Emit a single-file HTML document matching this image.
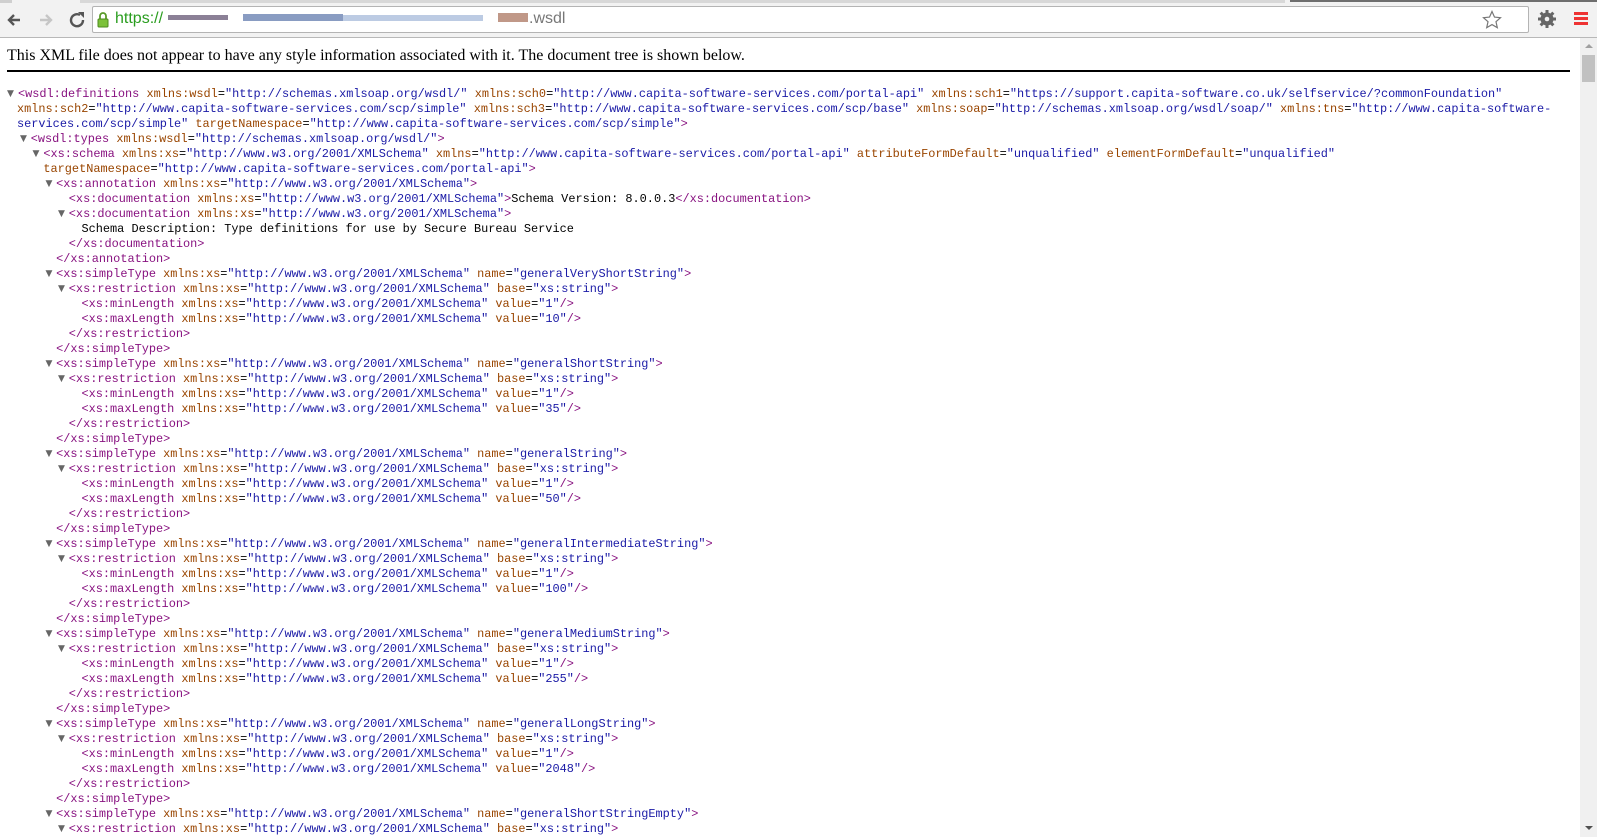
<!DOCTYPE html>
<html><head><meta charset="utf-8"><style>
*{margin:0;padding:0;box-sizing:border-box}
html,body{width:1597px;height:837px;overflow:hidden;background:#fff}
#tb{position:absolute;left:0;top:0;width:1597px;height:38px;background:#f2f2f2;border-bottom:1px solid #b8b8b8}
#tb .edge{position:absolute;top:0;height:3px;background:#cfcfcf}
#omni{position:absolute;left:92px;top:6px;width:1437px;height:27px;background:#fff;border:1px solid #b4b4b4;border-radius:2px;font:16px "Liberation Sans",sans-serif}
#hdr{position:absolute;left:7px;top:47px;font:16px "Liberation Serif",serif;color:#000;white-space:nowrap}
#hr{position:absolute;left:7px;top:70px;width:1563px;height:2px;background:#000}
#code{position:absolute;left:0;top:87px;font:11.9px/15px "Liberation Mono",monospace;color:#000}
.l{height:15px;position:relative;white-space:pre}
.t{color:#881280}.a{color:#994500}.v{color:#1a1aa6}
.tr{position:absolute;color:#666;font-size:9px;font-family:"DejaVu Sans",sans-serif}
#sb{position:absolute;left:1580px;top:38px;width:17px;height:799px;background:#f0f0f0}
#th{position:absolute;left:1582px;top:55px;width:13px;height:27px;background:#c1c1c1}
</style></head><body>
<div id="tb">
 <div class="edge" style="left:0;width:12px"></div>
 <div class="edge" style="left:80px;width:1205px;background:#d8d8d8"></div>
 <div class="edge" style="left:1290px;width:307px;background:#6e6e6e;height:2px"></div>
 <svg style="position:absolute;left:6px;top:11px" width="90" height="18" viewBox="0 0 90 18">
  <path d="M14 9H3M8 4L3 9l5 5" stroke="#555" stroke-width="2.4" fill="none"/>
  <path d="M34 9H45M40 4l5 5-5 5" stroke="#c6c6c6" stroke-width="2.4" fill="none"/>
  <path d="M74 4a6 6 0 1 0 3 5" stroke="#555" stroke-width="2.4" fill="none"/><path d="M72 1h6v6z" fill="#555"/>
 </svg>
 <div id="omni">
  <svg style="position:absolute;left:4px;top:5px" width="12" height="16"><path d="M3 7V4a3 3 0 0 1 6 0v3" stroke="#5a9a2a" stroke-width="1.8" fill="none"/><rect x="1" y="7" width="10" height="8" rx="1" fill="#7cc13a" stroke="#4d8a1d"/></svg>
  <span style="position:absolute;left:22px;top:3px;color:#2a9d1f">https://</span>
  <span style="position:absolute;left:75px;top:8px;width:60px;height:5px;background:#5a4a6a;opacity:.7"></span>
  <span style="position:absolute;left:150px;top:7px;width:100px;height:7px;background:#3a5a9a;opacity:.6"></span>
  <span style="position:absolute;left:250px;top:8px;width:140px;height:6px;background:#90a8d0;opacity:.6"></span>
  <span style="position:absolute;left:405px;top:6px;width:30px;height:9px;background:#c09888"></span>
  <span style="position:absolute;left:436px;top:3px;color:#777">.wsdl</span>
  <svg style="position:absolute;left:1389px;top:3px" width="20" height="20" viewBox="0 0 20 20"><path d="M10 1.5l2.5 5.6 6 .6-4.5 4 1.3 6-5.3-3.1-5.3 3.1 1.3-6-4.5-4 6-.6z" fill="#fff" stroke="#777" stroke-width="1.2"/></svg>
 </div>
 <svg style="position:absolute;left:1537px;top:9px" width="20" height="20" viewBox="0 0 20 20"><g fill="#666"><circle cx="10" cy="10" r="6.5"/><rect x="8.5" y="1" width="3" height="18"/><rect x="1" y="8.5" width="18" height="3"/><rect x="8.5" y="1" width="3" height="18" transform="rotate(45 10 10)"/><rect x="8.5" y="1" width="3" height="18" transform="rotate(-45 10 10)"/></g><circle cx="10" cy="10" r="2.3" fill="#f2f2f2"/></svg>
 <div style="position:absolute;left:1574px;top:12px;width:14px;height:3px;background:#e33"></div>
 <div style="position:absolute;left:1574px;top:17px;width:14px;height:3px;background:#e33"></div>
 <div style="position:absolute;left:1574px;top:22px;width:14px;height:3px;background:#e33"></div>
</div>
<div id="hdr">This XML file does not appear to have any style information associated with it. The document tree is shown below.</div>
<div id="hr"></div>
<div id="sb"><div style="position:absolute;left:5px;top:6px;border-left:4px solid transparent;border-right:4px solid transparent;border-bottom:4px solid #a0a0a0"></div><div style="position:absolute;left:5px;top:788px;border-left:4px solid transparent;border-right:4px solid transparent;border-top:4px solid #505050"></div></div>
<div id="th"></div>
<div id="code">
<div class="l" style="padding-left:18px"><span class="tr" style="left:7px">▼</span><span class="t">&lt;wsdl:definitions</span> <span class="a">xmlns:wsdl</span>=<span class="v">"http://schemas.xmlsoap.org/wsdl/"</span> <span class="a">xmlns:sch0</span>=<span class="v">"http://www.capita-software-services.com/portal-api"</span> <span class="a">xmlns:sch1</span>=<span class="v">"https://support.capita-software.co.uk/selfservice/?commonFoundation"</span></div>
<div class="l" style="padding-left:17px"><span class="a">xmlns:sch2</span>=<span class="v">"http://www.capita-software-services.com/scp/simple"</span> <span class="a">xmlns:sch3</span>=<span class="v">"http://www.capita-software-services.com/scp/base"</span> <span class="a">xmlns:soap</span>=<span class="v">"http://schemas.xmlsoap.org/wsdl/soap/"</span> <span class="a">xmlns:tns</span>=<span class="v">"http://www.capita-software-</span></div>
<div class="l" style="padding-left:17px"><span class="v">services.com/scp/simple"</span> <span class="a">targetNamespace</span>=<span class="v">"http://www.capita-software-services.com/scp/simple"</span><span class="t">&gt;</span></div>
<div class="l" style="padding-left:30.7px"><span class="tr" style="left:20px">▼</span><span class="t">&lt;wsdl:types</span> <span class="a">xmlns:wsdl</span>=<span class="v">"http://schemas.xmlsoap.org/wsdl/"</span><span class="t">&gt;</span></div>
<div class="l" style="padding-left:43.4px"><span class="tr" style="left:32.5px">▼</span><span class="t">&lt;xs:schema</span> <span class="a">xmlns:xs</span>=<span class="v">"http://www.w3.org/2001/XMLSchema"</span> <span class="a">xmlns</span>=<span class="v">"http://www.capita-software-services.com/portal-api"</span> <span class="a">attributeFormDefault</span>=<span class="v">"unqualified"</span> <span class="a">elementFormDefault</span>=<span class="v">"unqualified"</span></div>
<div class="l" style="padding-left:43.4px"><span class="a">targetNamespace</span>=<span class="v">"http://www.capita-software-services.com/portal-api"</span><span class="t">&gt;</span></div>
<div class="l" style="padding-left:56.1px"><span class="tr" style="left:45.5px">▼</span><span class="t">&lt;xs:annotation</span> <span class="a">xmlns:xs</span>=<span class="v">"http://www.w3.org/2001/XMLSchema"</span><span class="t">&gt;</span></div>
<div class="l" style="padding-left:68.8px"><span class="t">&lt;xs:documentation</span> <span class="a">xmlns:xs</span>=<span class="v">"http://www.w3.org/2001/XMLSchema"</span><span class="t">&gt;</span>Schema Version: 8.0.0.3<span class="t">&lt;/xs:documentation&gt;</span></div>
<div class="l" style="padding-left:68.8px"><span class="tr" style="left:58px">▼</span><span class="t">&lt;xs:documentation</span> <span class="a">xmlns:xs</span>=<span class="v">"http://www.w3.org/2001/XMLSchema"</span><span class="t">&gt;</span></div>
<div class="l" style="padding-left:81.5px">Schema Description: Type definitions for use by Secure Bureau Service</div>
<div class="l" style="padding-left:68.8px"><span class="t">&lt;/xs:documentation&gt;</span></div>
<div class="l" style="padding-left:56.1px"><span class="t">&lt;/xs:annotation&gt;</span></div>
<div class="l" style="padding-left:56.1px"><span class="tr" style="left:45.5px">▼</span><span class="t">&lt;xs:simpleType</span> <span class="a">xmlns:xs</span>=<span class="v">"http://www.w3.org/2001/XMLSchema"</span> <span class="a">name</span>=<span class="v">"generalVeryShortString"</span><span class="t">&gt;</span></div>
<div class="l" style="padding-left:68.8px"><span class="tr" style="left:58px">▼</span><span class="t">&lt;xs:restriction</span> <span class="a">xmlns:xs</span>=<span class="v">"http://www.w3.org/2001/XMLSchema"</span> <span class="a">base</span>=<span class="v">"xs:string"</span><span class="t">&gt;</span></div>
<div class="l" style="padding-left:81.5px"><span class="t">&lt;xs:minLength</span> <span class="a">xmlns:xs</span>=<span class="v">"http://www.w3.org/2001/XMLSchema"</span> <span class="a">value</span>=<span class="v">"1"</span><span class="t">/&gt;</span></div>
<div class="l" style="padding-left:81.5px"><span class="t">&lt;xs:maxLength</span> <span class="a">xmlns:xs</span>=<span class="v">"http://www.w3.org/2001/XMLSchema"</span> <span class="a">value</span>=<span class="v">"10"</span><span class="t">/&gt;</span></div>
<div class="l" style="padding-left:68.8px"><span class="t">&lt;/xs:restriction&gt;</span></div>
<div class="l" style="padding-left:56.1px"><span class="t">&lt;/xs:simpleType&gt;</span></div>
<div class="l" style="padding-left:56.1px"><span class="tr" style="left:45.5px">▼</span><span class="t">&lt;xs:simpleType</span> <span class="a">xmlns:xs</span>=<span class="v">"http://www.w3.org/2001/XMLSchema"</span> <span class="a">name</span>=<span class="v">"generalShortString"</span><span class="t">&gt;</span></div>
<div class="l" style="padding-left:68.8px"><span class="tr" style="left:58px">▼</span><span class="t">&lt;xs:restriction</span> <span class="a">xmlns:xs</span>=<span class="v">"http://www.w3.org/2001/XMLSchema"</span> <span class="a">base</span>=<span class="v">"xs:string"</span><span class="t">&gt;</span></div>
<div class="l" style="padding-left:81.5px"><span class="t">&lt;xs:minLength</span> <span class="a">xmlns:xs</span>=<span class="v">"http://www.w3.org/2001/XMLSchema"</span> <span class="a">value</span>=<span class="v">"1"</span><span class="t">/&gt;</span></div>
<div class="l" style="padding-left:81.5px"><span class="t">&lt;xs:maxLength</span> <span class="a">xmlns:xs</span>=<span class="v">"http://www.w3.org/2001/XMLSchema"</span> <span class="a">value</span>=<span class="v">"35"</span><span class="t">/&gt;</span></div>
<div class="l" style="padding-left:68.8px"><span class="t">&lt;/xs:restriction&gt;</span></div>
<div class="l" style="padding-left:56.1px"><span class="t">&lt;/xs:simpleType&gt;</span></div>
<div class="l" style="padding-left:56.1px"><span class="tr" style="left:45.5px">▼</span><span class="t">&lt;xs:simpleType</span> <span class="a">xmlns:xs</span>=<span class="v">"http://www.w3.org/2001/XMLSchema"</span> <span class="a">name</span>=<span class="v">"generalString"</span><span class="t">&gt;</span></div>
<div class="l" style="padding-left:68.8px"><span class="tr" style="left:58px">▼</span><span class="t">&lt;xs:restriction</span> <span class="a">xmlns:xs</span>=<span class="v">"http://www.w3.org/2001/XMLSchema"</span> <span class="a">base</span>=<span class="v">"xs:string"</span><span class="t">&gt;</span></div>
<div class="l" style="padding-left:81.5px"><span class="t">&lt;xs:minLength</span> <span class="a">xmlns:xs</span>=<span class="v">"http://www.w3.org/2001/XMLSchema"</span> <span class="a">value</span>=<span class="v">"1"</span><span class="t">/&gt;</span></div>
<div class="l" style="padding-left:81.5px"><span class="t">&lt;xs:maxLength</span> <span class="a">xmlns:xs</span>=<span class="v">"http://www.w3.org/2001/XMLSchema"</span> <span class="a">value</span>=<span class="v">"50"</span><span class="t">/&gt;</span></div>
<div class="l" style="padding-left:68.8px"><span class="t">&lt;/xs:restriction&gt;</span></div>
<div class="l" style="padding-left:56.1px"><span class="t">&lt;/xs:simpleType&gt;</span></div>
<div class="l" style="padding-left:56.1px"><span class="tr" style="left:45.5px">▼</span><span class="t">&lt;xs:simpleType</span> <span class="a">xmlns:xs</span>=<span class="v">"http://www.w3.org/2001/XMLSchema"</span> <span class="a">name</span>=<span class="v">"generalIntermediateString"</span><span class="t">&gt;</span></div>
<div class="l" style="padding-left:68.8px"><span class="tr" style="left:58px">▼</span><span class="t">&lt;xs:restriction</span> <span class="a">xmlns:xs</span>=<span class="v">"http://www.w3.org/2001/XMLSchema"</span> <span class="a">base</span>=<span class="v">"xs:string"</span><span class="t">&gt;</span></div>
<div class="l" style="padding-left:81.5px"><span class="t">&lt;xs:minLength</span> <span class="a">xmlns:xs</span>=<span class="v">"http://www.w3.org/2001/XMLSchema"</span> <span class="a">value</span>=<span class="v">"1"</span><span class="t">/&gt;</span></div>
<div class="l" style="padding-left:81.5px"><span class="t">&lt;xs:maxLength</span> <span class="a">xmlns:xs</span>=<span class="v">"http://www.w3.org/2001/XMLSchema"</span> <span class="a">value</span>=<span class="v">"100"</span><span class="t">/&gt;</span></div>
<div class="l" style="padding-left:68.8px"><span class="t">&lt;/xs:restriction&gt;</span></div>
<div class="l" style="padding-left:56.1px"><span class="t">&lt;/xs:simpleType&gt;</span></div>
<div class="l" style="padding-left:56.1px"><span class="tr" style="left:45.5px">▼</span><span class="t">&lt;xs:simpleType</span> <span class="a">xmlns:xs</span>=<span class="v">"http://www.w3.org/2001/XMLSchema"</span> <span class="a">name</span>=<span class="v">"generalMediumString"</span><span class="t">&gt;</span></div>
<div class="l" style="padding-left:68.8px"><span class="tr" style="left:58px">▼</span><span class="t">&lt;xs:restriction</span> <span class="a">xmlns:xs</span>=<span class="v">"http://www.w3.org/2001/XMLSchema"</span> <span class="a">base</span>=<span class="v">"xs:string"</span><span class="t">&gt;</span></div>
<div class="l" style="padding-left:81.5px"><span class="t">&lt;xs:minLength</span> <span class="a">xmlns:xs</span>=<span class="v">"http://www.w3.org/2001/XMLSchema"</span> <span class="a">value</span>=<span class="v">"1"</span><span class="t">/&gt;</span></div>
<div class="l" style="padding-left:81.5px"><span class="t">&lt;xs:maxLength</span> <span class="a">xmlns:xs</span>=<span class="v">"http://www.w3.org/2001/XMLSchema"</span> <span class="a">value</span>=<span class="v">"255"</span><span class="t">/&gt;</span></div>
<div class="l" style="padding-left:68.8px"><span class="t">&lt;/xs:restriction&gt;</span></div>
<div class="l" style="padding-left:56.1px"><span class="t">&lt;/xs:simpleType&gt;</span></div>
<div class="l" style="padding-left:56.1px"><span class="tr" style="left:45.5px">▼</span><span class="t">&lt;xs:simpleType</span> <span class="a">xmlns:xs</span>=<span class="v">"http://www.w3.org/2001/XMLSchema"</span> <span class="a">name</span>=<span class="v">"generalLongString"</span><span class="t">&gt;</span></div>
<div class="l" style="padding-left:68.8px"><span class="tr" style="left:58px">▼</span><span class="t">&lt;xs:restriction</span> <span class="a">xmlns:xs</span>=<span class="v">"http://www.w3.org/2001/XMLSchema"</span> <span class="a">base</span>=<span class="v">"xs:string"</span><span class="t">&gt;</span></div>
<div class="l" style="padding-left:81.5px"><span class="t">&lt;xs:minLength</span> <span class="a">xmlns:xs</span>=<span class="v">"http://www.w3.org/2001/XMLSchema"</span> <span class="a">value</span>=<span class="v">"1"</span><span class="t">/&gt;</span></div>
<div class="l" style="padding-left:81.5px"><span class="t">&lt;xs:maxLength</span> <span class="a">xmlns:xs</span>=<span class="v">"http://www.w3.org/2001/XMLSchema"</span> <span class="a">value</span>=<span class="v">"2048"</span><span class="t">/&gt;</span></div>
<div class="l" style="padding-left:68.8px"><span class="t">&lt;/xs:restriction&gt;</span></div>
<div class="l" style="padding-left:56.1px"><span class="t">&lt;/xs:simpleType&gt;</span></div>
<div class="l" style="padding-left:56.1px"><span class="tr" style="left:45.5px">▼</span><span class="t">&lt;xs:simpleType</span> <span class="a">xmlns:xs</span>=<span class="v">"http://www.w3.org/2001/XMLSchema"</span> <span class="a">name</span>=<span class="v">"generalShortStringEmpty"</span><span class="t">&gt;</span></div>
<div class="l" style="padding-left:68.8px"><span class="tr" style="left:58px">▼</span><span class="t">&lt;xs:restriction</span> <span class="a">xmlns:xs</span>=<span class="v">"http://www.w3.org/2001/XMLSchema"</span> <span class="a">base</span>=<span class="v">"xs:string"</span><span class="t">&gt;</span></div>
</div>
</body></html>
